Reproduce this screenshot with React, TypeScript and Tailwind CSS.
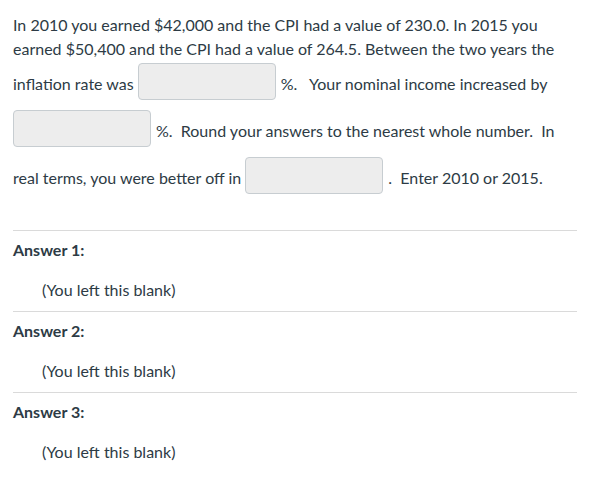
import React from "react";

function Blank() {
  return (
    <span className="inline-block w-[138px] h-[37px] align-[-18.5px] mt-[2px] mb-[8px] mr-[5px] rounded-[4px] border border-[#c7cdd1] bg-[#ededed]" />
  );
}

function Answer({ n }: { n: number }) {
  return (
    <div className="border-t border-[#dadada] h-[81px] pt-[9px]">
      <div className="font-bold text-[16px] leading-[20px]">Answer {n}:</div>
      <div className="pl-[29px] mt-[20px] text-[16px] leading-[20px]">(You left this blank)</div>
    </div>
  );
}

export default function App() {
  return (
    <div
      className="w-[591px] h-[478px] bg-white text-[#2d3b45] px-[13px] pt-[13px]"
      style={{ fontFamily: "Lato, 'Open Sans', sans-serif" }}
    >
      <p className="text-[16px] leading-[24px] w-[564px]">
        In 2010 you earned $42,000 and the CPI had a value of 230.0. In 2015 you earned $50,400 and the CPI had a
        value of 264.5. Between the two years the inflation rate was <Blank />
        %.&nbsp;&nbsp; Your nominal income increased by <Blank />
        %.&nbsp; Round your answers to the nearest whole number.&nbsp; In real terms, you were better off in <Blank />
        .&nbsp; Enter 2010 or 2015.
      </p>
      <div className="mt-[28px] w-[564px]">
        <Answer n={1} />
        <Answer n={2} />
        <Answer n={3} />
      </div>
    </div>
  );
}
